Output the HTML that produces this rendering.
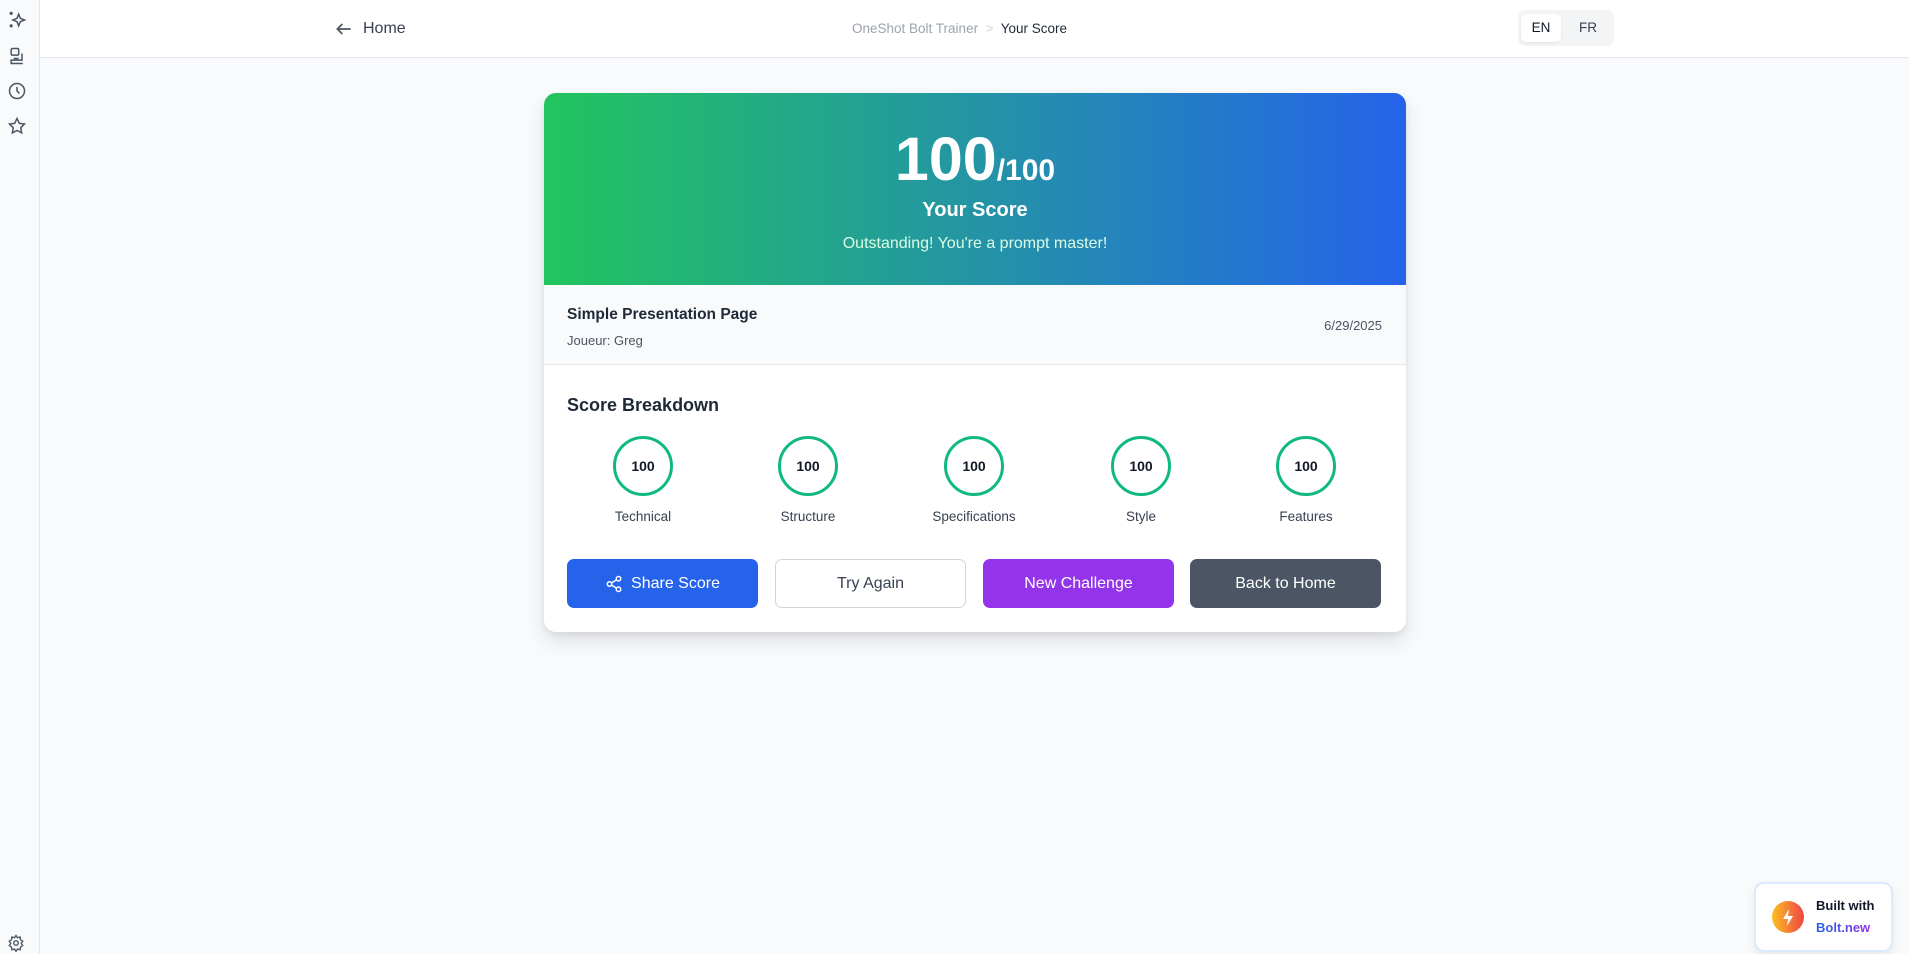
<!DOCTYPE html>
<html><head><meta charset="utf-8"><style>
*{box-sizing:border-box;margin:0;padding:0}
body{width:1909px;height:954px;background:#f8fafc;font-family:"Liberation Sans",sans-serif;position:relative;overflow:hidden;color:#111827}
.side{position:absolute;left:0;top:0;width:40px;height:954px;background:#f8fafc;border-right:1px solid #e5e7eb}
.side svg{position:absolute;left:7px}
.hdr{position:absolute;left:40px;top:0;right:0;height:58px;background:#fff;border-bottom:1px solid #e5e7eb}
.card{position:absolute;left:544px;top:93px;width:862px;height:539px;background:#fff;border-radius:12px;box-shadow:0 10px 20px rgba(0,0,0,.1),0 3px 6px rgba(0,0,0,.06);overflow:hidden}
.grad{height:192px;background:linear-gradient(90deg,#22c55e,#2563eb);color:#fff;text-align:center;position:relative}
.info{height:80px;background:#f9fafb;border-bottom:1px solid #e5e7eb;position:relative}
.c{position:absolute;width:60px;height:60px;border:3.5px solid #10b981;border-radius:50%;top:343px;display:flex;align-items:center;justify-content:center;font-weight:bold;font-size:14px}
.l{position:absolute;top:416px;width:160px;text-align:center;font-size:13.5px;color:#374151}
.b{position:absolute;width:191px;height:49px;border-radius:7px;display:flex;align-items:center;justify-content:center;font-size:16px;color:#fff}
</style></head><body>
<div class="side">
<svg style="top:10px" width="20" height="20" viewBox="0 0 24 24" fill="none" stroke="#4b5563" stroke-width="1.8"><path d="M14 5l2 5 5 2-5 2-2 5-2-5-5-2 5-2z"/><circle cx="5" cy="4" r="1" fill="#4b5563"/><circle cx="5" cy="19" r="1" fill="#4b5563"/></svg>
<svg style="top:46px" width="20" height="20" viewBox="0 0 24 24" fill="none" stroke="#4b5563" stroke-width="1.8"><rect x="5" y="3" width="9" height="8" rx="1.5"/><path d="M18 9v8H5v4h14M8 15h6"/></svg>
<svg style="top:81px" width="20" height="20" viewBox="0 0 24 24" fill="none" stroke="#4b5563" stroke-width="1.8"><circle cx="12" cy="12" r="9"/><path d="M12 7v5l3 3"/></svg>
<svg style="top:116px" width="20" height="20" viewBox="0 0 24 24" fill="none" stroke="#4b5563" stroke-width="1.8"><path d="M12 3l2.8 5.8 6.2.9-4.5 4.4 1.1 6.2L12 17.4 6.4 20.3l1.1-6.2L3 9.7l6.2-.9z"/></svg>
<svg style="top:934px" width="18" height="18" viewBox="0 0 24 24" fill="none" stroke="#4b5563" stroke-width="1.8"><circle cx="12" cy="12" r="3"/><path d="M12 2l2 3 3.5-1 .5 3.5 3 2-2 3 2 3-3 2-.5 3.5-3.5-1-2 3-2-3-3.5 1-.5-3.5-3-2 2-3-2-3 3-2 .5-3.5 3.5 1z"/></svg>
</div>
<div class="hdr">
<svg style="position:absolute;left:294px;top:19px" width="20" height="20" viewBox="0 0 24 24" fill="none" stroke="#4b5563" stroke-width="2"><path d="M20 12H4M10 6l-6 6 6 6"/></svg>
<div style="position:absolute;left:323px;top:20px;font-size:16px;color:#374151">Home</div>
<div style="position:absolute;left:812px;top:21px;font-size:13.5px;color:#9ca3af">OneShot Bolt Trainer &nbsp;<span style="color:#d1d5db">&gt;</span>&nbsp; <span style="color:#1f2937">Your Score</span></div>
<div style="position:absolute;left:1478px;top:10px;width:96px;height:36px;background:#f3f4f6;border-radius:7px">
<div style="position:absolute;left:3px;top:4px;width:40px;height:28px;background:#fff;border-radius:5px;box-shadow:0 1px 2px rgba(0,0,0,.08);font-size:13.5px;text-align:center;line-height:28px;color:#111827">EN</div>
<div style="position:absolute;left:55px;top:4px;width:30px;height:28px;font-size:13.5px;text-align:center;line-height:28px;color:#374151">FR</div>
</div>
</div>
<div class="card">
<div class="grad">
<div style="position:absolute;top:31px;width:100%;font-weight:bold"><span style="font-size:61px">100</span><span style="font-size:30px">/100</span></div>
<div style="position:absolute;top:106px;width:100%;font-weight:bold;font-size:20px">Your Score</div>
<div style="position:absolute;top:142px;width:100%;font-size:16px;color:#dcfce7">Outstanding! You're a prompt master!</div>
</div>
<div class="info">
<div style="position:absolute;left:23px;top:21px;font-size:15.5px;font-weight:bold;color:#1f2937">Simple Presentation Page</div>
<div style="position:absolute;left:23px;top:48px;font-size:13px;color:#4b5563">Joueur: Greg</div>
<div style="position:absolute;right:24px;top:33px;font-size:13px;color:#4b5563">6/29/2025</div>
</div>
<div style="position:absolute;left:23px;top:302px;font-size:18px;font-weight:bold;color:#1f2937">Score Breakdown</div>
<div class="c" style="left:69px">100</div><div class="l" style="left:19px">Technical</div>
<div class="c" style="left:234px">100</div><div class="l" style="left:184px">Structure</div>
<div class="c" style="left:400px">100</div><div class="l" style="left:350px">Specifications</div>
<div class="c" style="left:567px">100</div><div class="l" style="left:517px">Style</div>
<div class="c" style="left:732px">100</div><div class="l" style="left:682px">Features</div>
<div class="b" style="left:23px;top:466px;background:#2563eb"><svg width="18" height="18" viewBox="0 0 24 24" fill="none" stroke="#fff" stroke-width="2" style="margin-right:8px"><circle cx="18" cy="5" r="3"/><circle cx="6" cy="12" r="3"/><circle cx="18" cy="19" r="3"/><path d="M8.6 13.5l6.8 4M15.4 6.5l-6.8 4"/></svg>Share Score</div>
<div class="b" style="left:231px;top:466px;background:#fff;border:1px solid #d1d5db;color:#374151">Try Again</div>
<div class="b" style="left:439px;top:466px;background:#9333ea">New Challenge</div>
<div class="b" style="left:646px;top:466px;background:#4b5563">Back to Home</div>
</div>
<div style="position:absolute;left:1754px;top:882px;width:139px;height:70px;background:#fff;border:2px solid #dbeafe;border-radius:10px;box-shadow:0 4px 10px rgba(0,0,0,.08)">
<div style="position:absolute;left:16px;top:17px;width:32px;height:32px;border-radius:50%;background:linear-gradient(90deg,#fbbf24,#ef4444)"><svg width="32" height="32" viewBox="0 0 32 32"><path d="M17 8l-6 10h5l-1 7 6-10h-5z" fill="#fff"/></svg></div>
<div style="position:absolute;left:60px;top:14px;font-size:13px;font-weight:bold;color:#111827">Built with</div>
<div style="position:absolute;left:60px;top:36px;font-size:13px;font-weight:bold;background:linear-gradient(90deg,#2563eb,#9333ea);-webkit-background-clip:text;color:transparent">Bolt.new</div>
</div>
</body></html>
